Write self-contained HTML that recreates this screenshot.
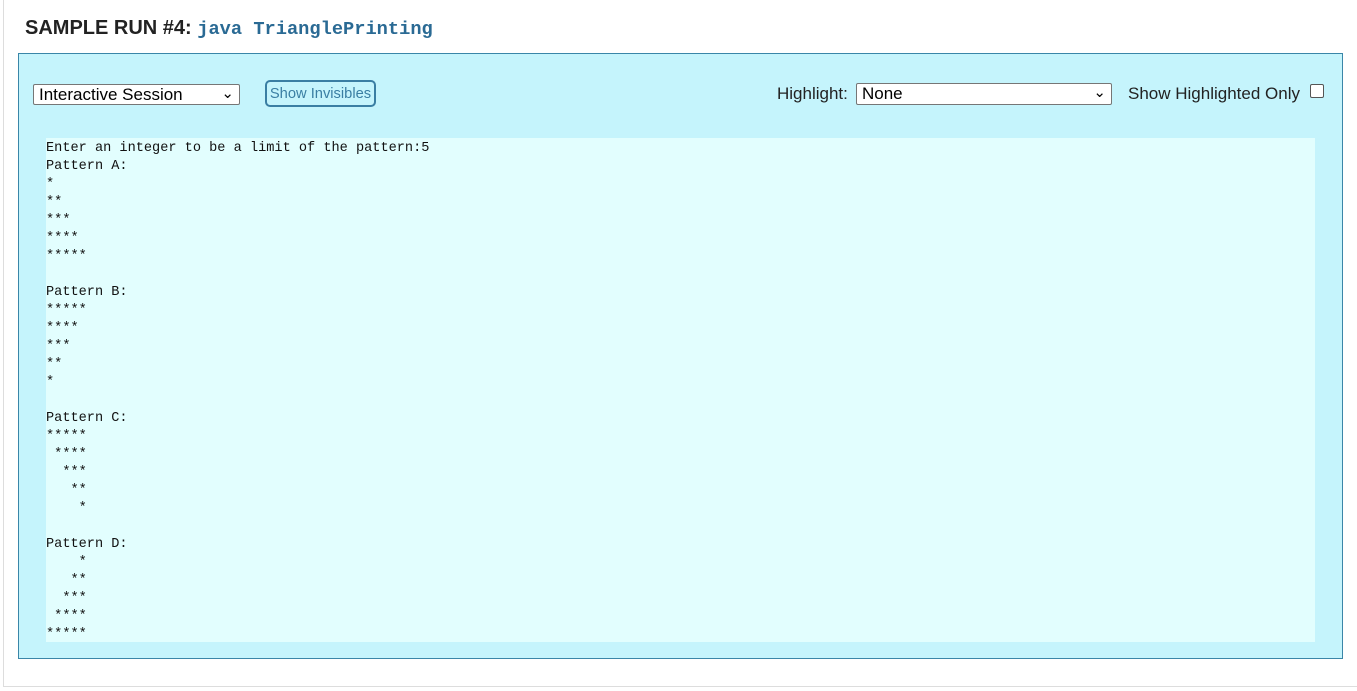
<!DOCTYPE html>
<html><head><style>
body{margin:0;background:#fff;width:1357px;height:691px;overflow:hidden;font-family:"Liberation Sans",sans-serif;}
.outer{position:absolute;left:3px;top:-1px;width:1360px;height:687px;border-left:1px solid #ddd;border-bottom:1px solid #ddd;}
h2{position:absolute;left:25px;top:17px;margin:0;font-size:20px;font-weight:bold;color:#222;white-space:nowrap;}
h2 code{font-family:"Liberation Mono",monospace;color:#2a6a94;font-size:18.7px;}
.panel{position:absolute;left:18px;top:53px;width:1323px;height:604px;background:#c5f4fc;border:1px solid #3a86a8;}
.sel{position:absolute;background:#fff;border:1px solid #767676;border-radius:2px;font-size:17px;color:#000;padding-left:5px;box-sizing:border-box;white-space:nowrap;}
.chev{position:absolute;right:5px;top:-1px;font-size:15px;}
.btn{position:absolute;left:246px;top:26px;width:111px;height:27px;border:2px solid #3a7ea3;border-radius:5px;box-sizing:border-box;color:#3a7ea3;font-size:14.7px;text-align:center;line-height:25px;white-space:nowrap;}
.lbl{position:absolute;font-size:17px;color:#222;white-space:nowrap;}
.cb{position:absolute;left:1291px;top:30px;width:12px;height:12px;border:1px solid #555;border-radius:2px;background:#fff;}
pre{position:absolute;left:27px;top:84px;width:1269px;height:502px;padding-top:2px;margin:0;background:#e2fefe;font-family:"Liberation Mono",monospace;font-size:13.6px;line-height:18px;color:#111;}
</style></head><body>
<div class="outer"></div>
<h2>SAMPLE RUN #4: <code>java TrianglePrinting</code></h2>
<div class="panel">
<div class="sel" style="left:14px;top:30px;width:207px;height:21px;line-height:19px;">Interactive Session<span class="chev">⌄</span></div>
<div class="btn">Show Invisibles</div>
<div class="lbl" style="left:758px;top:30px;">Highlight:</div>
<div class="sel" style="left:837px;top:29px;width:256px;height:22px;line-height:20px;">None<span class="chev">⌄</span></div>
<div class="lbl" style="left:1109px;top:30px;">Show Highlighted Only</div>
<div class="cb"></div>
<pre>Enter an integer to be a limit of the pattern:5
Pattern A:
*
**
***
****
*****

Pattern B:
*****
****
***
**
*

Pattern C:
*****
 ****
  ***
   **
    *

Pattern D:
    *
   **
  ***
 ****
*****</pre>
</div>
</body></html>
